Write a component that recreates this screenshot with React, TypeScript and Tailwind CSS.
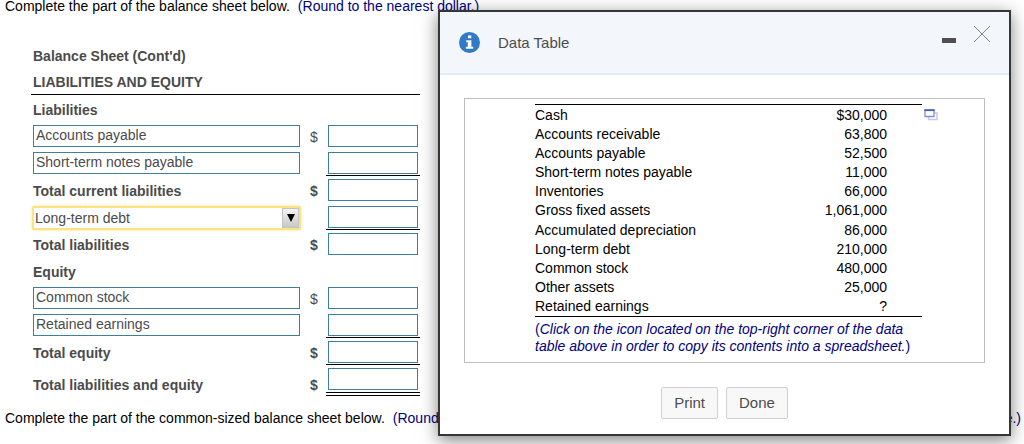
import { useState } from "react";

type Row = {
  label: string;
  kind: "heading" | "account" | "select" | "total";
  dollar?: boolean;
  amount?: boolean;
  rule?: "single" | "double";
};

const rows: Row[] = [
  { label: "Liabilities", kind: "heading" },
  { label: "Accounts payable", kind: "account", dollar: true, amount: true },
  { label: "Short-term notes payable", kind: "account", amount: true, rule: "single" },
  { label: "Total current liabilities", kind: "total", dollar: true, amount: true },
  { label: "Long-term debt", kind: "select", amount: true, rule: "single" },
  { label: "Total liabilities", kind: "total", dollar: true, amount: true },
  { label: "Equity", kind: "heading" },
  { label: "Common stock", kind: "account", dollar: true, amount: true },
  { label: "Retained earnings", kind: "account", amount: true, rule: "single" },
  { label: "Total equity", kind: "total", dollar: true, amount: true, rule: "single" },
  { label: "Total liabilities and equity", kind: "total", dollar: true, amount: true, rule: "double" },
];

const data = [
  ["Cash", "$30,000"],
  ["Accounts receivable", "63,800"],
  ["Accounts payable", "52,500"],
  ["Short-term notes payable", "11,000"],
  ["Inventories", "66,000"],
  ["Gross fixed assets", "1,061,000"],
  ["Accumulated depreciation", "86,000"],
  ["Long-term debt", "210,000"],
  ["Common stock", "480,000"],
  ["Other assets", "25,000"],
  ["Retained earnings", "?"],
];

const ruleClass = {
  none: "",
  single: "border-b border-black",
  double: "border-b-4 border-double border-black",
};

function AccountSelect() {
  const [value, setValue] = useState("Long-term debt");
  return (
    <div className="relative -mx-px flex h-6 rounded-xs border-2 border-[#fbe283] bg-white shadow-[0_0_3px_#fbe283]">
      <select
        aria-label="Liability account"
        value={value}
        onChange={(e) => setValue(e.target.value)}
        className="w-full appearance-none bg-transparent pl-px leading-4 outline-none"
      >
        <option>Long-term debt</option>
        <option>Common stock</option>
        <option>Retained earnings</option>
      </select>
      <span className="pointer-events-none absolute inset-y-0 right-0 flex w-[17px] items-center justify-center border border-[#c4c4c4] bg-linear-to-b from-[#f4f4f4] to-[#c8c8c8]">
        <svg viewBox="0 0 8 8" className="size-2" aria-hidden="true">
          <path d="M0 0H8L4 8Z" fill="#000" />
        </svg>
      </span>
    </div>
  );
}

function SheetRow({ row }: { row: Row }) {
  const id = row.label.toLowerCase().replace(/[^a-z]+/g, "-");
  const bold = row.kind === "heading" || row.kind === "total";
  const pad = row.rule === "double" ? "pt-2" : "pt-0.5";
  return (
    <tr className={row.rule === "double" ? "h-[31px]" : "h-[27px]"}>
      <td className={bold ? `pl-0.5 align-middle font-bold ${pad}` : "pl-0.5 pt-[3px] align-top"}>
        {bold && (row.amount ? <label htmlFor={id}>{row.label}</label> : row.label)}
        {row.kind === "account" && (
          <input
            aria-label="Account name"
            defaultValue={row.label}
            className="block h-[22px] w-full border border-[#3d809c] px-0.5 pb-0.5 outline-none"
          />
        )}
        {row.kind === "select" && <AccountSelect />}
      </td>
      <td className={bold ? `pl-0.5 text-center font-bold ${pad}` : `pl-0.5 text-center ${pad}`}>
        {row.dollar ? "$" : ""}
      </td>
      <td className={`px-0.5 pt-[3px] align-top ${ruleClass[row.rule ?? "none"]}`}>
        {row.amount && (
          <input
            id={id}
            aria-label={row.label}
            className="block h-[22px] w-full border border-[#3d809c] px-0.5 outline-none"
          />
        )}
      </td>
    </tr>
  );
}

function BalanceSheet() {
  return (
    <section className="mt-[31px] ml-[31px] w-[389px] text-[#4b4b4b]">
      <h1 className="pl-0.5 leading-[26px] font-bold">Balance Sheet (Cont'd)</h1>
      <h2 className="border-b border-black pt-px pl-0.5 leading-6 font-bold">LIABILITIES AND EQUITY</h2>
      <table className="w-full table-fixed border-separate border-spacing-0 leading-4">
        <colgroup>
          <col />
          <col className="w-[26px]" />
          <col className="w-[94px]" />
        </colgroup>
        <tbody>
          {rows.map((row) => (
            <SheetRow key={row.label} row={row} />
          ))}
        </tbody>
      </table>
    </section>
  );
}

function DataDialog() {
  return (
    <div
      role="dialog"
      aria-label="Data Table"
      className="absolute top-[10px] right-[13px] left-[438px] border-2 border-[#353638] bg-white text-black shadow-[0_4px_16px_rgba(0,0,0,0.5)]"
    >
      <header className="flex h-[63px] border-b-2 border-[#e0ecf9] bg-[#f3f6fb] px-[19px]">
        <svg viewBox="0 0 21 21" className="mt-5 size-[21px]" aria-hidden="true">
          <circle cx="10.5" cy="10.5" r="10.5" fill="#307ac9" />
          <path d="M9 3.5h3.3v2.7H9zM7.2 8.2h5.2v6.5h1.8v2.1H6.9v-2.1h1.9v-4.4H7.2z" fill="#fff" />
        </svg>
        <h2 className="mt-5 ml-[18px] text-[15px] leading-[22px] text-[#4d4d4d]">Data Table</h2>
        <button type="button" aria-label="Minimize" className="mt-[26px] ml-auto flex h-[5px] w-[14px] bg-[#4f4f4f]" />
        <button type="button" aria-label="Close" className="mt-[14px] ml-[18px] size-4">
          <svg viewBox="0 0 16 16" className="size-4" aria-hidden="true">
            <path d="M0 0L16 16M16 0L0 16" stroke="#858585" strokeWidth="1" />
          </svg>
        </button>
      </header>
      <div className="mx-6 mt-[23px] border border-[#bdbdbd] pt-[5px] pr-[46px] pb-[7px] pl-[70px]">
        <div className="flex items-start justify-between">
          <table className="h-[213px] w-[387px] border-y border-black leading-4">
            <tbody>
              {data.map(([name, amount]) => (
                <tr key={name}>
                  <td>{name}</td>
                  <td className="pr-[35px] text-right">{amount}</td>
                </tr>
              ))}
            </tbody>
          </table>
          <button type="button" aria-label="Copy to spreadsheet" className="mt-[5px]">
            <svg viewBox="0 0 14 12" className="block h-3 w-[14px]" aria-hidden="true">
              <path d="M4.5 4H13V10.5H4.5Z" fill="#fff" stroke="#c3c9e6" strokeWidth="1.5" />
              <path d="M1 1H10V7.5H1Z" fill="#fff" stroke="#8290cb" strokeWidth="1.3" />
              <path d="M.4 1.2H10.6" stroke="#4f60ae" strokeWidth="1.8" />
            </svg>
          </button>
        </div>
        <p className="w-[387px] pt-1 leading-[17px] text-[#000080]">
          (<i>Click on the icon located on the top-right corner of the data table above in order to copy its contents into a spreadsheet.</i>)
        </p>
      </div>
      <footer className="flex justify-center gap-2 pt-6 pb-[15px] text-[15px] text-[#4d4d4d]">
        <button type="button" className="h-8 rounded-xs border border-[#d0d0d0] bg-[#f8f8f8] px-3">
          Print
        </button>
        <button type="button" className="h-8 rounded-xs border border-[#d0d0d0] bg-[#f8f8f8] px-3">
          Done
        </button>
      </footer>
    </div>
  );
}

export default function App() {
  return (
    <main className="relative min-h-screen overflow-hidden bg-white font-['Liberation_Sans',Arial,sans-serif] text-[14px] text-black">
      <p className="flex gap-2 pl-[5px] leading-3 whitespace-nowrap">
        Complete the part of the balance sheet below.
        <span className="text-[#000080]">(Round to the nearest dollar.)</span>
      </p>
      <BalanceSheet />
      <div className="mt-4 flex justify-between pr-[3px] pl-[5px] leading-3 whitespace-nowrap">
        <p className="flex gap-2">
          Complete the part of the common-sized balance sheet below.
          <span className="text-[#000080]">(Round</span>
        </p>
        <p className="text-[#000080]">to one decimal place.)</p>
      </div>
      <DataDialog />
    </main>
  );
}
